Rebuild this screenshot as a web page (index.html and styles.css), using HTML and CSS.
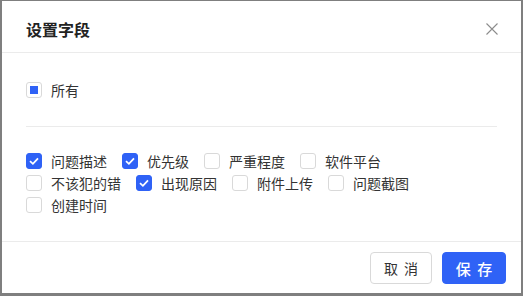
FILE: index.html
```html
<!DOCTYPE html>
<html lang="zh-CN">
<head>
  <meta charset="UTF-8" />
  <title>设置字段</title>
  <link rel="stylesheet" href="styles.css">
</head>
<body>

<div class="modal">
  <div class="modal-header">
    <span class="modal-title">设置字段</span>
    <span class="modal-close">
      <svg width="12" height="12" viewBox="0 0 12 12"><path d="M0.5 0.5 L11.5 11.5 M11.5 0.5 L0.5 11.5" stroke="#8c8c8c" stroke-width="1.1" fill="none"/></svg>
    </span>
  </div>

  <div class="modal-body">
    <label class="check-item">
      <span class="check-box half"></span>
      <span class="check-label">所有</span>
    </label>

    <div class="divider"></div>

    <div class="check-group">
      <label class="check-item"><span class="check-box on"><svg viewBox="0 0 16 16"><path d="M4 8.2 L6.9 10.8 L12 5.4" /></svg></span><span class="check-label">问题描述</span></label>
      <label class="check-item"><span class="check-box on"><svg viewBox="0 0 16 16"><path d="M4 8.2 L6.9 10.8 L12 5.4" /></svg></span><span class="check-label">优先级</span></label>
      <label class="check-item"><span class="check-box"></span><span class="check-label">严重程度</span></label>
      <label class="check-item"><span class="check-box"></span><span class="check-label">软件平台</span></label>
      <label class="check-item"><span class="check-box"></span><span class="check-label">不该犯的错</span></label>
      <label class="check-item"><span class="check-box on"><svg viewBox="0 0 16 16"><path d="M4 8.2 L6.9 10.8 L12 5.4" /></svg></span><span class="check-label">出现原因</span></label>
      <label class="check-item"><span class="check-box"></span><span class="check-label">附件上传</span></label>
      <label class="check-item"><span class="check-box"></span><span class="check-label">问题截图</span></label>
      <label class="check-item"><span class="check-box"></span><span class="check-label">创建时间</span></label>
    </div>
  </div>

  <div class="modal-footer">
    <button class="btn btn-cancel">取 消</button>
    <button class="btn btn-primary">保 存</button>
  </div>
</div>

</body>
</html>
```

FILE: styles.css
```css
html, body {
  margin: 0;
  height: 100%;
}

body {
  background-color: #7f7f7f;
  padding: 1px 2px 3px 2px;
  box-sizing: border-box;
  font-family: "Noto Sans CJK SC", "Noto Sans", sans-serif;
  color: #333;
}

.modal {
  background-color: white;
  height: 100%;
  display: flex;
  flex-direction: column;
}

.modal-header {
  height: 51px;
  border-bottom: 1px solid #ebebeb;
  display: flex;
  align-items: center;
  justify-content: space-between;
  padding: 4px 23px 0 24px;
}

.modal-title {
  font-size: 16px;
  font-weight: 600;
  color: #222;
}

.modal-close {
  display: flex;
  width: 12px;
  height: 12px;
}

.modal-body {
  padding: 22px 24px 25px 24px;
  flex: 1;
}

.check-item {
  display: inline-flex;
  align-items: center;
  height: 22px;
  font-size: 14px;
  cursor: pointer;
  margin-right: 15px;
}

.check-box {
  width: 16px;
  height: 16px;
  box-sizing: border-box;
  border: 1px solid #d9d9d9;
  border-radius: 3px;
  background-color: white;
  margin-right: 9px;
  display: flex;
  align-items: center;
  justify-content: center;
}

.check-box.on {
  background-color: #2f62f6;
  border-color: #2f62f6;
}

.check-box svg {
  width: 16px;
  height: 16px;
  flex: none;
}

.check-box svg path {
  fill: none;
  stroke: white;
  stroke-width: 1.8;
}

.check-box.half::after {
  content: "";
  width: 8px;
  height: 8px;
  background-color: #2f62f6;
}

.check-label {
  line-height: 22px;
  color: #333;
}

.divider {
  height: 1px;
  background-color: #ebebeb;
  margin: 25px 0 23px 0;
}

.check-group {
  width: 430px;
  display: flex;
  flex-wrap: wrap;
}

.modal-footer {
  border-top: 1px solid #ebebeb;
  padding: 10px 15px 9px 0;
  display: flex;
  justify-content: flex-end;
  gap: 10px;
}

.btn {
  height: 32px;
  border-radius: 4px;
  font-family: inherit;
  font-size: 14px;
  padding: 0;
  letter-spacing: 1.5px;
  text-indent: 1.5px;
  cursor: pointer;
}

.btn-cancel {
  width: 62px;
  border: 1px solid #d9d9d9;
  background-color: white;
  color: #333;
}

.btn-primary {
  width: 64px;
  border: 1px solid #2f62f6;
  background-color: #2f62f6;
  color: white;
  font-size: 15px;
  font-weight: 500;
}
```
